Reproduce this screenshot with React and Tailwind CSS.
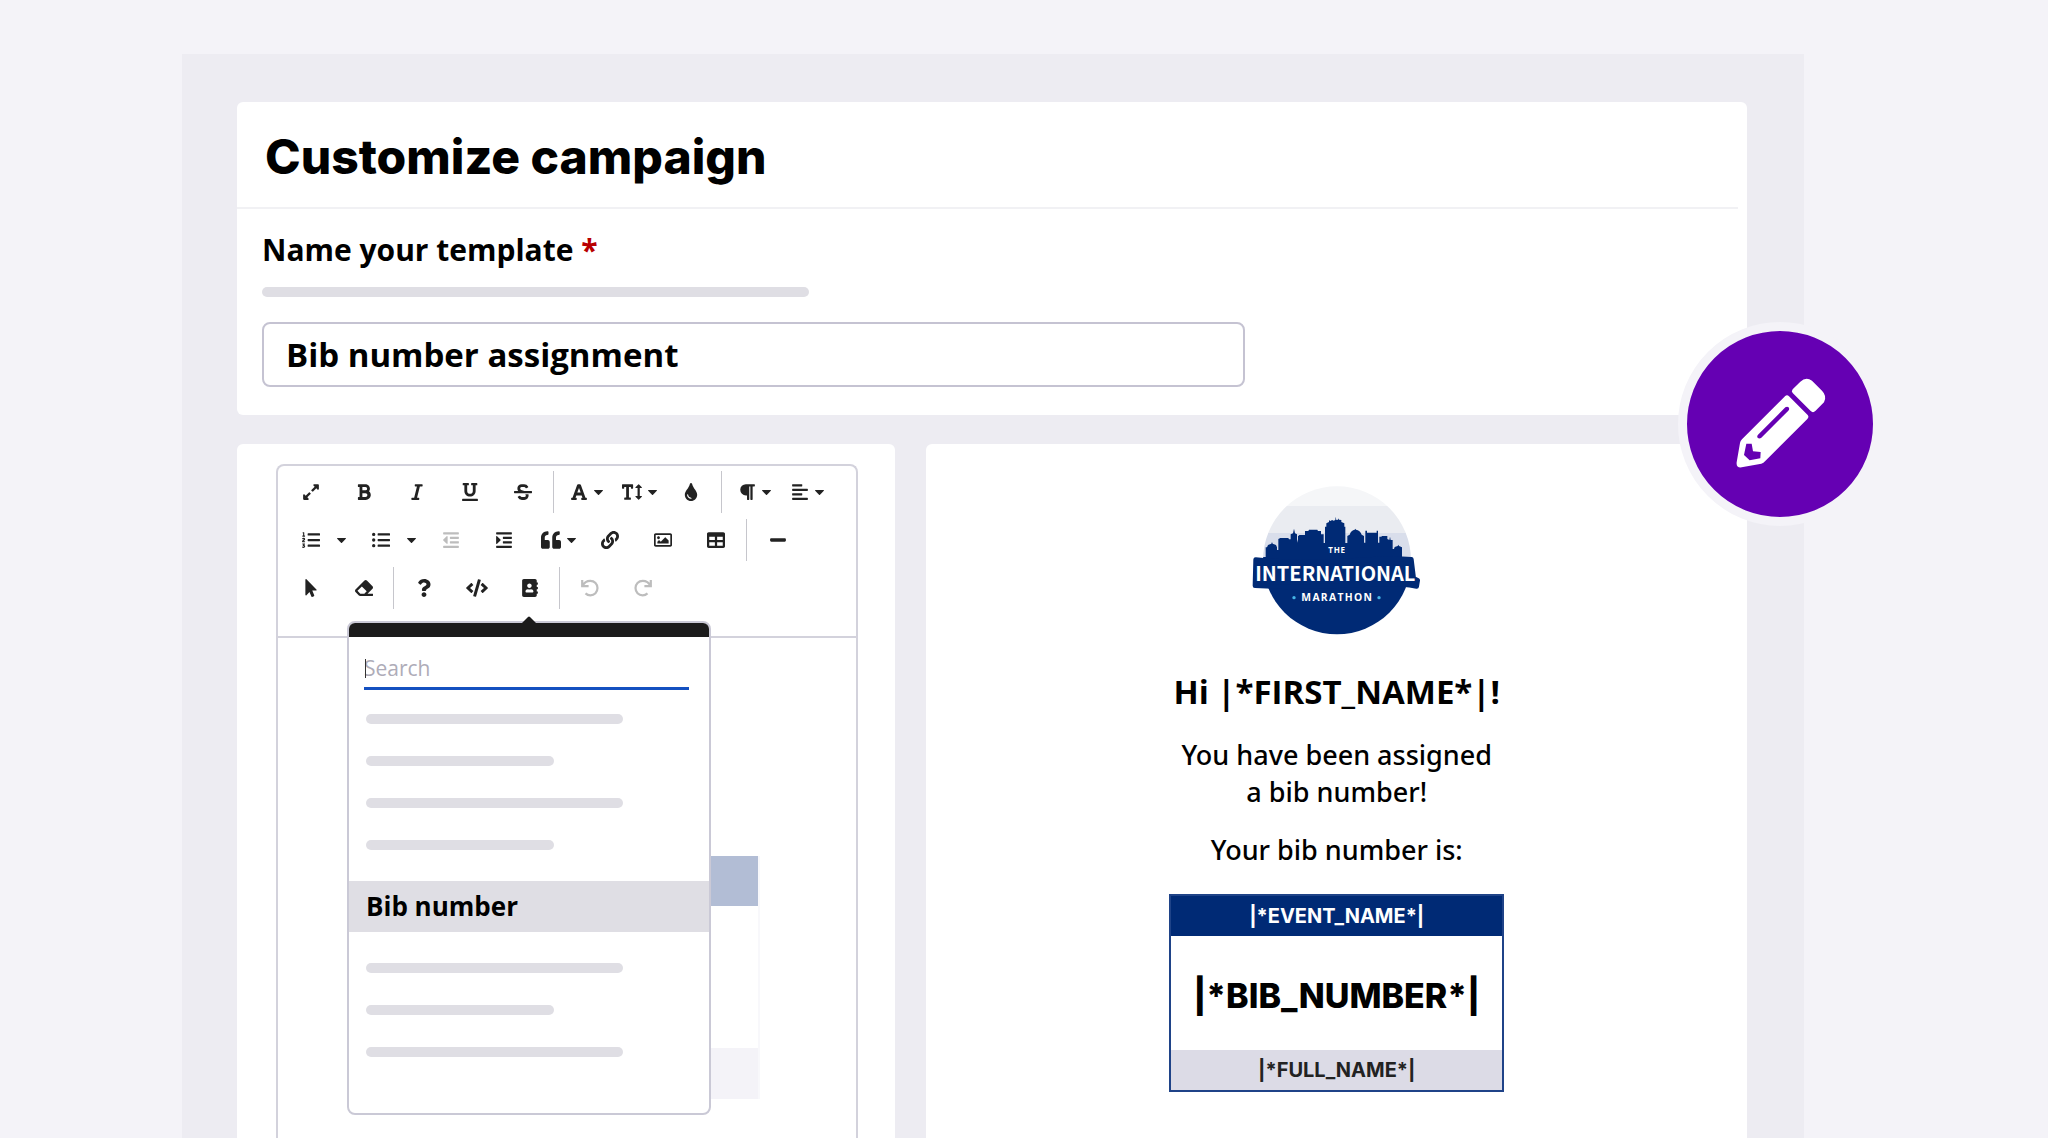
import {
  FaExpandAlt, FaBold, FaItalic, FaUnderline, FaStrikethrough, FaFont, FaTextHeight, FaTint,
  FaParagraph, FaAlignLeft, FaListOl, FaListUl, FaOutdent, FaIndent, FaQuoteLeft, FaLink,
  FaRegImage, FaTable, FaMinus, FaMousePointer, FaEraser, FaQuestion, FaCode, FaAddressBook,
} from "react-icons/fa";

const Caret = () => (
  <svg className="h-[5px] w-[9px] shrink-0" viewBox="0 0 9 5" aria-hidden="true">
    <path d="M0.4 0H8.6Q9.2.2 8.8.8L5 4.7Q4.5 5.1 4 4.7L.2.8Q-.2.2.4 0Z" fill="currentColor" />
  </svg>
);

function Tool({ label, icon: Icon, size = 18, menu = false, off = false }) {
  return (
    <button
      type="button"
      aria-label={label}
      aria-haspopup={menu ? "menu" : undefined}
      disabled={off}
      className="flex h-[42px] w-[53px] shrink-0 items-center justify-center gap-1.5 text-[#222222] disabled:text-[#bdbdbd] aria-[haspopup=menu]:pl-1"
    >
      <Icon size={size} aria-hidden="true" />
      {menu && <Caret />}
    </button>
  );
}

function MenuCaret({ label }) {
  return (
    <button type="button" aria-label={label} className="flex h-[42px] w-[17px] shrink-0 items-center justify-start text-[#222222]">
      <Caret />
    </button>
  );
}

const Separator = ({ tight = false }) => (
  <div className={tight ? "mx-[3px] h-[42px] w-px bg-[#c6c6cc]" : "mx-1 h-[42px] w-px bg-[#c6c6cc]"} />
);

function UndoIcon({ size, flip = false }) {
  return (
    <svg width={size} height={size} viewBox="0 0 18 18" fill="none" stroke="currentColor" strokeWidth="2.2" aria-hidden="true">
      <g transform={flip ? "translate(18 0) scale(-1 1)" : undefined}>
        <path d="M1.2 1v6.2h6.4" />
        <path d="M1.6 6.8C3.2 3.4 6 1.9 9.3 1.9c4.3 0 7.2 3.1 7.2 7.2s-3 7.2-7.1 7.2c-2 0-3.6-.7-4.9-1.9" />
      </g>
    </svg>
  );
}
const RedoIcon = (props) => <UndoIcon {...props} flip />;

const Line = ({ short = false }) => (
  <div className={short ? "h-[10px] w-[188px] rounded-full bg-[#dfdee4]" : "h-[10px] w-[257px] rounded-full bg-[#dfdee4]"} />
);

function MergeTagMenu() {
  return (
    <div className="absolute left-[69px] top-[155px] w-[364px]">
      <svg className="absolute -top-[5px] left-[175px]" width="14" height="7" viewBox="0 0 14 7" aria-hidden="true">
        <path d="M0 7 6 1Q7 0 8 1L14 7Z" fill="#1b1b1b" />
      </svg>
      <div className="overflow-hidden rounded-lg border-2 border-[#cac9d6] bg-white pb-14">
        <div className="-mx-px h-[14px] bg-[#1b1b1b]" />
        <div className="px-[15px] pt-3">
          <input
            type="text"
            aria-label="Search"
            placeholder="Search"
            className="block h-[41px] w-[325px] border-b-[3px] border-[#1450c0] bg-transparent text-[21px] leading-[36px] outline-none placeholder:text-[#aeacb8]"
          />
        </div>
        <div className="flex flex-col gap-8 px-[17px] pt-6 pb-[31px]">
          <Line />
          <Line short />
          <Line />
          <Line short />
        </div>
        <button type="button" className="flex h-[51px] w-full items-center bg-[#dfdee4] px-[17px] pb-0.5 text-left text-[26px] font-bold leading-[36px]">
          Bib number
        </button>
        <div className="flex flex-col gap-8 px-[17px] pt-[31px]">
          <Line />
          <Line short />
          <Line />
        </div>
      </div>
      <div className="absolute left-[18px] top-[38px] h-[19px] w-px bg-[#333333]" />
    </div>
  );
}

function Editor() {
  return (
    <section className="rounded-t-md bg-white pt-5 pr-[37px] pl-[39px]">
      <div className="relative h-full rounded-t-lg border-2 border-b-0 border-[#d3d2dc]">
        <div role="toolbar" aria-label="Formatting" className="flex h-[172px] flex-col gap-[6px] border-b-2 border-[#d3d2dc] pt-[5px] pl-[6px]">
          <div className="flex items-center">
            <Tool label="Full screen" icon={FaExpandAlt} />
            <Tool label="Bold" icon={FaBold} />
            <Tool label="Italic" icon={FaItalic} />
            <Tool label="Underline" icon={FaUnderline} />
            <Tool label="Strikethrough" icon={FaStrikethrough} />
            <Separator />
            <Tool label="Text color" icon={FaFont} menu />
            <Tool label="Font size" icon={FaTextHeight} size={20} menu />
            <Tool label="Background color" icon={FaTint} />
            <Separator />
            <Tool label="Paragraph format" icon={FaParagraph} menu />
            <Tool label="Align" icon={FaAlignLeft} menu />
          </div>
          <div className="flex items-center">
            <Tool label="Ordered list" icon={FaListOl} />
            <MenuCaret label="Ordered list options" />
            <Tool label="Unordered list" icon={FaListUl} />
            <MenuCaret label="Unordered list options" />
            <Tool label="Decrease indent" icon={FaOutdent} off />
            <Tool label="Increase indent" icon={FaIndent} />
            <Tool label="Quote" icon={FaQuoteLeft} size={20} menu />
            <Tool label="Insert link" icon={FaLink} />
            <Tool label="Insert image" icon={FaRegImage} />
            <Tool label="Insert table" icon={FaTable} />
            <Separator />
            <Tool label="Horizontal line" icon={FaMinus} />
          </div>
          <div className="flex items-center">
            <Tool label="Select all" icon={FaMousePointer} />
            <Tool label="Clear formatting" icon={FaEraser} />
            <Separator tight />
            <Tool label="Help" icon={FaQuestion} />
            <Tool label="Code view" icon={FaCode} size={22} />
            <Tool label="Merge tags" icon={FaAddressBook} />
            <Separator tight />
            <Tool label="Undo" icon={UndoIcon} off />
            <Tool label="Redo" icon={RedoIcon} off />
          </div>
        </div>
        <div className="mx-auto mt-[218px] w-[386px] border-r-2 border-[#f8f8fb]">
          <div className="h-[50px] bg-[#b2bdd5]" />
          <div className="h-[142px]" />
          <div className="h-[51px] bg-[#f4f3f8]" />
        </div>
        <MergeTagMenu />
      </div>
    </section>
  );
}

function MarathonLogo() {
  return (
    <svg className="h-[155px] w-[174px]" viewBox="61 40 522 465" role="img" aria-label="The International Marathon">
      <defs>
        <clipPath id="disc"><circle cx="322" cy="272" r="222" /></clipPath>
      </defs>
      <g clipPath="url(#disc)">
        <rect x="90" y="40" width="470" height="70" fill="#f5f6f8" />
        <rect x="90" y="109" width="470" height="82" fill="#eaecf1" />
        <rect x="90" y="190" width="470" height="90" fill="#d9deeb" />
        <rect x="90" y="262" width="470" height="240" fill="#002a75" />
        <path fill="#002a75" d="M108 270V233h4l3-7 10-4 2-5 2 5 10 4 3 7v8h4v-33l6-3h24l2 4h5v-15l7-3 3-14 3 14 6 3v15l3 10v-19l4-4h17v-12h10l2-4h25l2 4h9v10h8v26h4v-49h4v-10l8-4v-5l5 2 4-3 5 2 5-2 1-10 2 10 5-1 1-4 2 4 7 1v6l9 4v10h3v49h6v-21l7-4c2-9 9-14 15-15l2-3 2 3c8 1 14 6 17 15l7 4v20h4v-36h5v6h29v-6h4v36h4v-18h6l2-2h16v9l6 3 2-10 2 10h6v27h4l2-6 9-3 2-4 2 4 9 4v44Z" />
      </g>
      <path
        d="M78 270Q120 274 180 277L322 275L470 267Q510 266 545 269L552 326L564 332L561 350Q520 343 470 342L322 348L180 352L76 348Z"
        fill="#002a75" stroke="#002a75" strokeWidth="14" strokeLinejoin="round"
      />
      <g fill="#ffffff" textAnchor="middle" fontWeight="700">
        <text x="322" y="251" fontSize="24" fontFamily="Open Sans, sans-serif" letterSpacing="2">THE</text>
        <text x="317" y="334" fontSize="60" fontFamily="Noto Sans CJK SC, Open Sans, sans-serif">INTERNATIONAL</text>
        <text x="323" y="395" fontSize="31" fontFamily="Open Sans, sans-serif" letterSpacing="4">MARATHON</text>
      </g>
      <circle cx="193" cy="384" r="5" fill="#45b5e6" />
      <circle cx="448" cy="384" r="5" fill="#45b5e6" />
    </svg>
  );
}

function Preview() {
  return (
    <section className="flex flex-col items-center rounded-t-md bg-white pt-[39px] text-center text-black">
      <MarathonLogo />
      <h2 className="mt-[30px] text-[33px] font-bold leading-[48px]">Hi |*FIRST_NAME*|!</h2>
      <div className="mt-5 flex flex-col gap-[21px] font-['Noto_Sans',sans-serif] text-[27px] font-medium leading-[37px]">
        <p>
          You have been assigned
          <br />a bib number!
        </p>
        <p>Your bib number is:</p>
      </div>
      <div className="mt-[26px] w-[335px] border-2 border-[#1f4388] font-['Inter',sans-serif] font-bold">
        <div className="flex h-10 items-center justify-center bg-[#002a75] text-[20px] text-white">|*EVENT_NAME*|</div>
        <div className="flex h-[114px] items-center justify-center pt-1 text-[34px] font-extrabold">|*BIB_NUMBER*|</div>
        <div className="flex h-[40px] items-center justify-center bg-[#dcdbe6] text-[20px] text-[#222222]">|*FULL_NAME*|</div>
      </div>
    </section>
  );
}

function EditButton() {
  return (
    <button
      type="button"
      aria-label="Edit campaign"
      className="absolute -right-[135px] top-[220px] flex size-[204px] items-center justify-center rounded-full border-[9px] border-[#f4f3f8] bg-[#6500b3]"
    >
      <svg className="size-[96px]" viewBox="216 199 288 288" aria-hidden="true">
        <path fill="#fff" d="M398 239 421 216Q438 200 456 213L486 243Q502 259 492 278L466 304Q459 311 452 304L398 250Q393 245 398 239Z" />
        <path fill="#fff" fillRule="evenodd" d="M375 260Q381 254 387 260L443 316Q448 322 442 328L315 455Q311 460 304 462L245 473Q228 475 230 458L240 400Q241 394 246 389ZM259 402 252 436 269 452 301 446 302 427 279 425 275 402ZM376 293 294 375C287 383 297 390 304 384L385 303C392 295 383 287 376 293Z" />
      </svg>
    </button>
  );
}

export default function App() {
  return (
    <main className="flex h-screen flex-col overflow-hidden bg-[#f4f3f8] pt-[54px] pr-[244px] pl-[182px] font-['Open_Sans',sans-serif] text-black">
      <div className="flex min-h-0 flex-1 flex-col gap-[29px] bg-[#edecf2] pt-12 pr-[57px] pl-[55px]">
        <section className="relative shrink-0 rounded-md bg-white pb-7">
          <h1 className="mr-[9px] border-b-2 border-[#f1f1f4] pt-[25px] pb-5 pl-7 font-['Inter',sans-serif] text-[48px] font-extrabold leading-[60px]">
            Customize campaign
          </h1>
          <div className="px-[25px] pt-5">
            <label htmlFor="template-name" className="block text-[30px] font-bold leading-[42px]">
              Name your template <span className="text-[#b80000]">*</span>
            </label>
            <div className="mt-4 h-[10px] w-[547px] rounded-full bg-[#dfdee4]" />
            <input
              id="template-name"
              type="text"
              defaultValue="Bib number assignment"
              className="mt-[25px] block h-[65px] w-[983px] rounded-lg border-2 border-[#c5c3d2] px-[22px] text-[33px] font-bold"
            />
          </div>
          <EditButton />
        </section>
        <div className="grid min-h-0 flex-1 grid-cols-[658fr_820fr] gap-[31px]">
          <Editor />
          <Preview />
        </div>
      </div>
    </main>
  );
}
